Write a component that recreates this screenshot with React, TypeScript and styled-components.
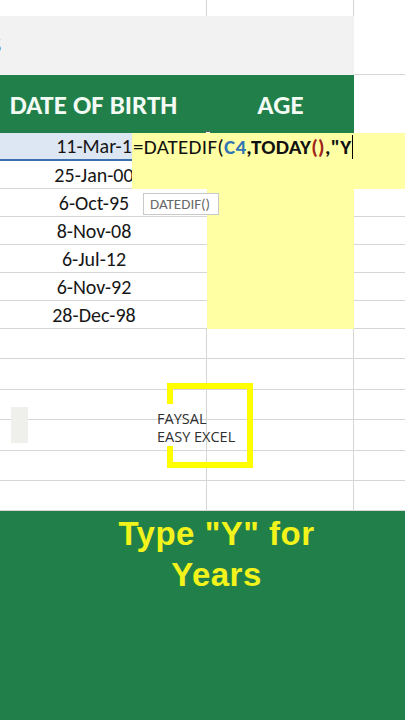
import React from "react";
import styled, { createGlobalStyle } from "styled-components";

const GlobalStyle = createGlobalStyle`
  html, body {
    margin: 0;
    padding: 0;
    background: #ffffff;
  }
`;

const GRID = "#d6d6d6";
const GREEN = "#21804a";
const FILL = "#ffffa3";

const Page = styled.div`
  position: relative;
  width: 405px;
  height: 720px;
  overflow: hidden;
  background: #ffffff;
  font-family: Carlito, Lato, "Liberation Sans", sans-serif;
`;

const Row = styled.div<{ $h: number }>`
  display: grid;
  grid-template-columns: 207px 147px 1fr;
  height: ${(p) => p.$h}px;
`;

const Cell = styled.div<{ $bg?: string; $bottom?: boolean; $right?: boolean; $span?: number }>`
  box-sizing: border-box;
  background: ${(p) => p.$bg || "transparent"};
  border-bottom: ${(p) => (p.$bottom ? `1px solid ${GRID}` : "none")};
  border-right: ${(p) => (p.$right ? `1px solid ${GRID}` : "none")};
  grid-column: span ${(p) => p.$span || 1};
  overflow: hidden;
  display: flex;
  align-items: center;
`;

const TitleCell = styled(Cell)`
  font-size: 22px;
  color: #333;
`;

const CutLetter = styled.span`
  margin-left: -9px;
`;

const HeaderCell = styled(Cell)<{ $pr?: number }>`
  background: ${GREEN};
  color: #f4faf4;
  font-weight: 700;
  font-size: 27px;
  justify-content: center;
  padding-right: ${(p) => p.$pr || 0}px;
`;

const DateCell = styled(Cell)<{ $selected?: boolean }>`
  justify-content: center;
  padding-right: 19px;
  font-size: 20px;
  color: #161616;
  background: ${(p) => (p.$selected ? "#dde7f3" : "#ffffff")};
  border-bottom: ${(p) => (p.$selected ? "2px solid #3d6fb0" : `1px solid ${GRID}`)};
`;

const FormulaBox = styled.div`
  position: absolute;
  left: 132px;
  top: 133px;
  width: 273px;
  height: 56px;
  background: ${FILL};
  box-sizing: border-box;
  padding-left: 1px;
  font-size: 21px;
  line-height: 29px;
  letter-spacing: 0.3px;
  color: #111;
  white-space: nowrap;
`;

const Ref = styled.span`
  font-weight: 700;
  color: #2f74b5;
`;

const Bold = styled.span`
  font-weight: 700;
`;

const Paren = styled.span`
  font-weight: 700;
  color: #a0231c;
`;

const Caret = styled.span`
  display: inline-block;
  width: 1px;
  height: 24px;
  background: #000;
  vertical-align: -5px;
  margin-left: 1px;
`;

const Tooltip = styled.div`
  position: absolute;
  left: 143px;
  top: 193px;
  width: 76px;
  height: 22px;
  box-sizing: border-box;
  border: 1px solid #c9c9c9;
  background: #fff;
  color: #6a6a6a;
  font-size: 15px;
  display: flex;
  align-items: center;
  padding-left: 6px;
`;

const FillHandle = styled.div`
  position: absolute;
  left: 205px;
  top: 131px;
  width: 4px;
  height: 4px;
  border: 1px solid #4d6e5a;
  background: #fff;
`;

const GrayMark = styled.div`
  position: absolute;
  left: 11px;
  top: 407px;
  width: 17px;
  height: 36px;
  background: #efefec;
`;

const Logo = styled.div`
  position: absolute;
  left: 157px;
  top: 383px;
  width: 96px;
  height: 86px;
`;

const LogoMark = styled.svg`
  position: absolute;
  left: 10px;
  top: 0;
`;

const LogoText = styled.div`
  position: absolute;
  left: 0;
  top: 27px;
  font-family: "Open Sans", sans-serif;
  font-size: 14.5px;
  line-height: 18px;
  color: #2f2f2f;
  white-space: nowrap;
`;

const Banner = styled.div`
  height: 209px;
  background: ${GREEN};
  display: flex;
  flex-direction: column;
  align-items: center;
  padding-left: 28px;
  padding-top: 2px;
  box-sizing: border-box;
  font-family: "Liberation Sans", Arial, sans-serif;
  font-weight: 700;
  font-size: 33px;
  line-height: 41px;
  letter-spacing: 0.5px;
  color: #f3f31c;
`;

const dates = ["11-Mar-1", "25-Jan-00", "6-Oct-95", "8-Nov-08", "6-Jul-12", "6-Nov-92", "28-Dec-98"];
const emptyRows = [30, 31, 30, 31, 30, 30];

export default function App() {
  return (
    <Page>
      <GlobalStyle />
      <Row $h={16}>
        <Cell $right />
        <Cell $right />
        <Cell />
      </Row>
      <Row $h={59}>
        <TitleCell $bg="#f2f2f2" $span={2}>
          <CutLetter>S</CutLetter>
        </TitleCell>
        <Cell $bottom />
      </Row>
      <Row $h={58}>
        <HeaderCell $pr={20}>DATE OF BIRTH</HeaderCell>
        <HeaderCell>AGE</HeaderCell>
        <Cell />
      </Row>
      {dates.map((d, i) => (
        <Row $h={28} key={d}>
          <DateCell $selected={i === 0}>{d}</DateCell>
          <Cell $bg={FILL} />
          <Cell $bottom />
        </Row>
      ))}
      {emptyRows.map((h, i) => (
        <Row $h={h} key={i}>
          <Cell $bottom $right />
          <Cell $bottom $right />
          <Cell $bottom />
        </Row>
      ))}
      <Banner>
        <div>Type "Y" for</div>
        <div>Years</div>
      </Banner>

      <FillHandle />
      <FormulaBox>
        =DATEDIF(<Ref>C4</Ref>
        <Bold>,TODAY</Bold>
        <Paren>()</Paren>
        <Bold>,"Y</Bold>
        <Caret />
      </FormulaBox>
      <Tooltip>DATEDIF()</Tooltip>
      <GrayMark />
      <Logo>
        <LogoMark width="86" height="86" viewBox="0 0 86 86">
          <polyline
            points="3,21 3,3 83,3 83,82 3,82 3,63"
            fill="none"
            stroke="#ffff00"
            strokeWidth="6"
          />
        </LogoMark>
        <LogoText>
          FAYSAL
          <br />
          EASY EXCEL
        </LogoText>
      </Logo>
    </Page>
  );
}
